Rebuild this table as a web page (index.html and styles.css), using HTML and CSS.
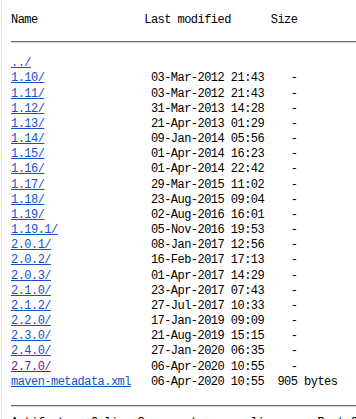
FILE: index.html
```html
<!DOCTYPE html>
<html>
<head>
<meta charset="utf-8">
<title>Index</title>
<link rel="stylesheet" href="styles.css">
</head>
<body>
<div class="page">
<pre class="head">Name                Last modified      Size</pre>
<hr class="rule rule-top">
<pre class="list"><a href="#">../</a>
<a href="#">1.10/</a>                03-Mar-2012 21:43    -
<a href="#">1.11/</a>                03-Mar-2012 21:43    -
<a href="#">1.12/</a>                31-Mar-2013 14:28    -
<a href="#">1.13/</a>                21-Apr-2013 01:29    -
<a href="#">1.14/</a>                09-Jan-2014 05:56    -
<a href="#">1.15/</a>                01-Apr-2014 16:23    -
<a href="#">1.16/</a>                01-Apr-2014 22:42    -
<a href="#">1.17/</a>                29-Mar-2015 11:02    -
<a href="#">1.18/</a>                23-Aug-2015 09:04    -
<a href="#">1.19/</a>                02-Aug-2016 16:01    -
<a href="#">1.19.1/</a>              05-Nov-2016 19:53    -
<a href="#">2.0.1/</a>               08-Jan-2017 12:56    -
<a href="#">2.0.2/</a>               16-Feb-2017 17:13    -
<a href="#">2.0.3/</a>               01-Apr-2017 14:29    -
<a href="#">2.1.0/</a>               23-Apr-2017 07:43    -
<a href="#">2.1.2/</a>               27-Jul-2017 10:33    -
<a href="#">2.2.0/</a>               17-Jan-2019 09:09    -
<a href="#">2.3.0/</a>               21-Aug-2019 15:15    -
<a href="#">2.4.0/</a>               27-Jan-2020 06:35    -
<a class="visited" href="#">2.7.0/</a>               06-Apr-2020 10:55    -
<a href="#">maven-metadata.xml</a>   06-Apr-2020 10:55  905 bytes</pre>
<hr class="rule rule-bottom">
<address class="foot">Artifactory Online Server at maven.aliyun.com Port 80</address>
</div>
</body>
</html>
```

FILE: styles.css
```css
html, body {
  margin: 0;
  padding: 0;
  background: #ffffff;
  overflow: hidden;
}

.page {
  margin-left: 1px;
  border-left: 1px solid #e4e4e4;
  padding-left: 9px;
  min-height: 419px;
  box-sizing: border-box;
}

.head,
.list,
.foot {
  font-family: "Liberation Mono", "DejaVu Sans Mono", monospace;
  font-size: 12px;
  letter-spacing: -0.54px;
  line-height: 15.17px;
  color: #000000;
  white-space: pre;
  margin: 0;
}

.head {
  padding-top: 13px;
}

.rule {
  height: 0;
  border: 0;
  border-top: 1px solid #6e6e6e;
  border-bottom: 1px solid #cfcfcf;
  margin: 0;
}

.rule-top {
  margin-top: 13px;
  margin-bottom: 13px;
}

.rule-bottom {
  margin-top: 15px;
}

.list a {
  color: #1550d0;
  text-decoration: underline;
}

.list a.visited {
  color: #6a1b8f;
}

.foot {
  font-style: normal;
  margin-top: 9px;
}
```
